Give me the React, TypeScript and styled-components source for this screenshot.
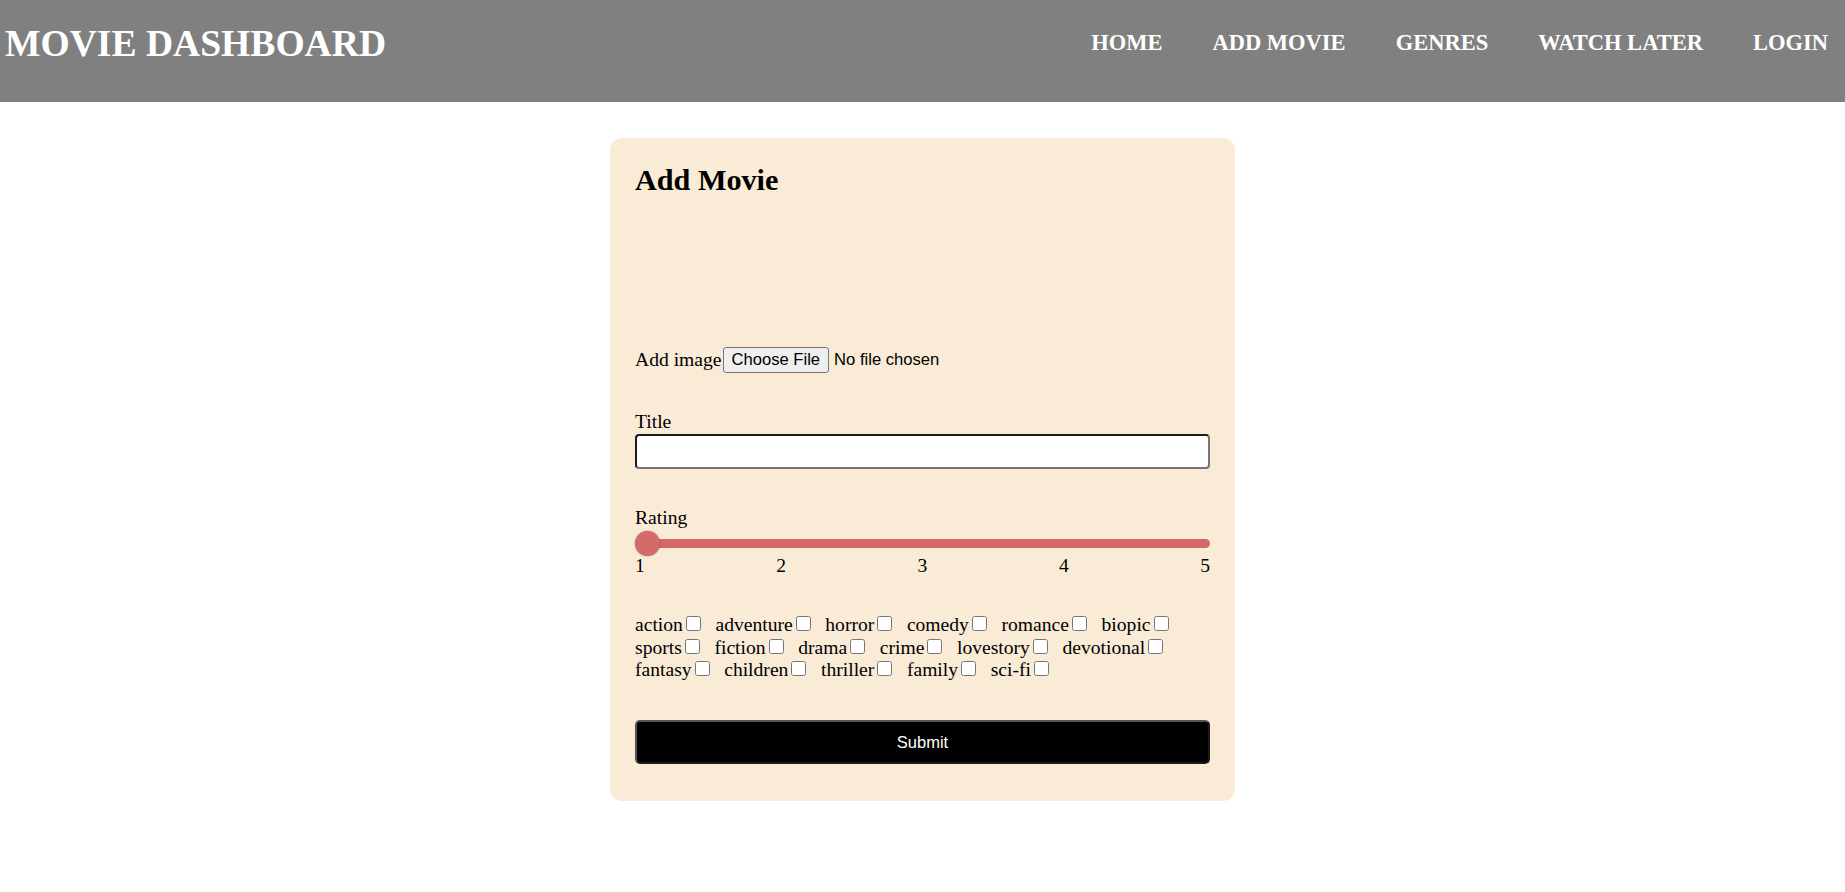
import React, { useState } from 'react';
import styled, { createGlobalStyle } from 'styled-components';

const GENRES = [
  'action',
  'adventure',
  'horror',
  'comedy',
  'romance',
  'biopic',
  'sports',
  'fiction',
  'drama',
  'crime',
  'lovestory',
  'devotional',
  'fantasy',
  'children',
  'thriller',
  'family',
  'sci-fi',
];

const NAV_ITEMS = ['HOME', 'ADD MOVIE', 'GENRES', 'WATCH LATER', 'LOGIN'];

export default function App() {
  const [rating, setRating] = useState(1);
  const [title, setTitle] = useState('');

  return (
    <>
      <GlobalStyle />
      <Header>
        <Brand>MOVIE DASHBOARD</Brand>
        <NavList>
          {NAV_ITEMS.map(item => (
            <NavLink key={item} href="#">
              {item}
            </NavLink>
          ))}
        </NavList>
      </Header>

      <Main>
        <Card onSubmit={e => e.preventDefault()}>
          <Heading>Add Movie</Heading>

          {/* empty image preview */}
          <Preview />

          <FileRow>
            <label htmlFor="poster">Add image</label>
            <FileInput id="poster" type="file" accept="image/*" />
          </FileRow>

          <Field>
            <FieldLabel htmlFor="title">Title</FieldLabel>
            <TextInput id="title" value={title} onChange={e => setTitle(e.target.value)} />
          </Field>

          <Field>
            <FieldLabel htmlFor="rating">Rating</FieldLabel>
            <Slider
              id="rating"
              type="range"
              min={1}
              max={5}
              step={1}
              value={rating}
              onChange={e => setRating(Number(e.target.value))}
            />
            <Scale>
              {[1, 2, 3, 4, 5].map(n => (
                <span key={n}>{n}</span>
              ))}
            </Scale>
          </Field>

          <Genres>
            {GENRES.map(genre => (
              <Genre key={genre}>
                {genre}
                <Check type="checkbox" name={genre} />
              </Genre>
            ))}
          </Genres>

          <SubmitButton type="submit">Submit</SubmitButton>
        </Card>
      </Main>
    </>
  );
}

const GlobalStyle = createGlobalStyle`
  html, body {
    margin: 0;
    padding: 0;
    background: #ffffff;
  }

  body {
    font-family: "Liberation Serif", "Times New Roman", serif;
    font-size: 19.6px;
    color: #000000;
  }

  * {
    box-sizing: border-box;
  }
`;

/* header */

const Header = styled.header`
  height: 102px;
  padding: 0 17px 16px 5px;

  background: #808080;

  display: flex;
  justify-content: space-between;
  align-items: center;
`;

const Brand = styled.h1`
  margin: 0;

  font-size: 37.6px;
  line-height: 43px;
  font-weight: bold;
  color: #ffffff;
`;

const NavList = styled.nav`
  display: flex;
  align-items: center;
  gap: 50px;
`;

const NavLink = styled.a`
  font-size: 22.5px;
  line-height: 26px;
  font-weight: bold;
  color: #ffffff;
  text-decoration: none;
`;

/* card */

const Main = styled.main`
  padding: 36px 0 60px;
`;

const Card = styled.form`
  width: 625px;
  margin: 0 auto;
  padding: 25px 25px 37px;

  background: #faebd7;
  border-radius: 12px;

  display: flex;
  flex-direction: column;
`;

const Heading = styled.h2`
  margin: 0;

  font-size: 30.2px;
  line-height: 34px;
  font-weight: bold;
`;

const Preview = styled.div`
  height: 150px;
`;

const FileRow = styled.div`
  height: 26px;

  display: flex;
  align-items: center;

  line-height: 22.5px;
`;

const FileInput = styled.input`
  font-family: "Liberation Sans", Arial, sans-serif;
  font-size: 16.6px;
  color: #000000;

  &::file-selector-button {
    height: 25.5px;
    margin: 0 5px 0 1px;
    padding: 0 8px;

    font-family: "Liberation Sans", Arial, sans-serif;
    font-size: 16.6px;
    color: #000000;

    background: #efefef;
    border: 1px solid #767676;
    border-radius: 3px;
  }
`;

const Field = styled.div`
  margin-top: 38px;

  display: flex;
  flex-direction: column;
`;

const FieldLabel = styled.label`
  line-height: 22.5px;
`;

const TextInput = styled.input`
  width: 100%;
  height: 35px;
  padding: 0 6px;

  font-family: "Liberation Sans", Arial, sans-serif;
  font-size: 16.6px;

  background: #ffffff;
  border: 2px solid;
  border-color: #1c1c1c #767676 #767676 #1c1c1c;
  border-radius: 4px;
  outline: none;
`;

const Slider = styled.input`
  -webkit-appearance: none;
  appearance: none;

  width: 100%;
  height: 26px;
  margin: 1px 0 0;

  background: transparent;

  &::-webkit-slider-runnable-track {
    height: 9px;
    background: #d46a6a;
    border-radius: 5px;
  }

  &::-webkit-slider-thumb {
    -webkit-appearance: none;
    width: 25px;
    height: 25px;
    margin-top: -8px;

    background: #d46a6a;
    border-radius: 50%;
    box-shadow: 0 0 1px 0.5px rgba(0, 0, 0, 0.25);
  }
`;

const Scale = styled.div`
  margin-top: 0;

  display: flex;
  justify-content: space-between;

  line-height: 20px;
`;

const Genres = styled.div`
  margin-top: 38px;

  line-height: 22.7px;
`;

const Genre = styled.span`
  display: inline-block;
  margin-right: 11.6px;
  white-space: nowrap;
`;

const Check = styled.input`
  width: 15px;
  height: 15px;
  margin: 0 3px 0 3px;

  vertical-align: baseline;
`;

const SubmitButton = styled.button`
  height: 44px;
  margin-top: 38px;

  font-family: "Liberation Sans", Arial, sans-serif;
  font-size: 16.5px;
  color: #ffffff;

  background: #000000;
  border: 2px solid;
  border-color: #555555 #1a1a1a #1a1a1a #555555;
  border-radius: 5px;

  cursor: pointer;
`;
